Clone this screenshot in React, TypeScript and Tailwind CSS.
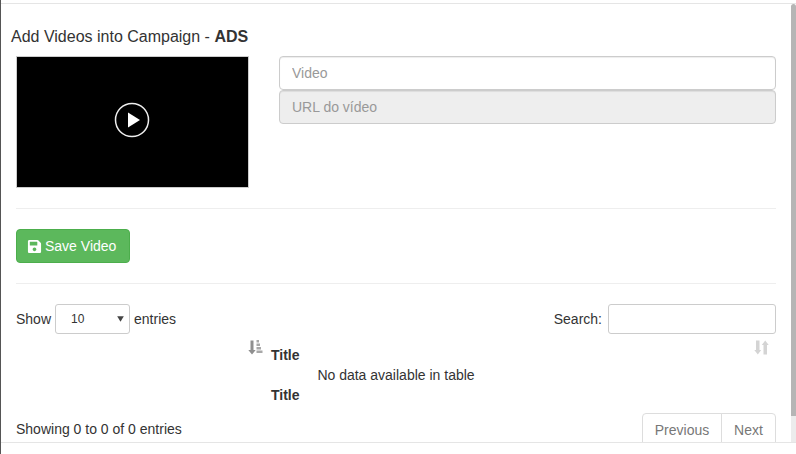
import { FaSave } from "react-icons/fa";

function SortAsc() {
  return (
    <svg width="15" height="15" viewBox="0 0 15 15" className="text-[#8f8f8f]" fill="currentColor">
      <path d="M2.5 0.5h3v9.5h2.2L4 14.5 0.3 10h2.2z" />
      <g className="text-[#a8a8a8]" fill="currentColor">
        <rect x="8.5" y="0" width="2.5" height="2.5" />
        <rect x="8.5" y="3.5" width="3.5" height="2.5" />
        <rect x="8.5" y="7" width="4.5" height="2.5" />
        <rect x="8.5" y="10.5" width="6" height="2.5" />
      </g>
    </svg>
  );
}

function SortBoth() {
  return (
    <svg width="15" height="15" viewBox="0 0 15 15" className="text-[#d4d4d4]" fill="currentColor">
      <path d="M2 0.5h3.5v9.5h1.7L3.8 14.5 0.3 10H2z" />
      <path d="M9.5 14.5H13V5h1.7L11.2 0.5 7.8 5h1.7z" />
    </svg>
  );
}

export default function App() {
  return (
    <div className="relative flex h-[454px] w-[796px] flex-col overflow-hidden border-l border-[#555] bg-white font-['Liberation_Sans',Arial,sans-serif] text-[14px] leading-5 text-[#333]">
      <div className="h-[4px] shrink-0 border-b border-[#e5e5e5]" />
      <div className="h-[438px] shrink-0 overflow-hidden">
        <h4 className="mt-[23px] ml-[10px] h-[20px] text-[16px] leading-5 font-normal">
          Add Videos into Campaign - <b>ADS</b>
        </h4>
        <div className="mt-[9px] ml-[15px] flex w-[760px] justify-between">
          <div className="flex h-[132px] w-[233px] items-center justify-center border border-[#ccc] bg-black">
            <svg width="36" height="36" viewBox="0 0 36 36" fill="none" className="mb-[4px] ml-[-1px]">
              <circle cx="18" cy="18" r="16.5" stroke="#eeeeee" strokeWidth="1.5" />
              <path d="M14 10.5L26 18L14 25.5z" fill="white" />
            </svg>
          </div>
          <div className="flex w-[497px] flex-col">
            <input
              placeholder="Video"
              className="h-[34px] rounded border border-[#ccc] bg-white px-3 shadow-[inset_0_1px_1px_rgba(0,0,0,0.075)] outline-none placeholder:text-[#999]"
            />
            <input
              disabled
              placeholder="URL do vídeo"
              className="h-[34px] rounded border border-[#ccc] bg-[#eee] px-3 shadow-[inset_0_1px_1px_rgba(0,0,0,0.075)] outline-none placeholder:text-[#999]"
            />
          </div>
        </div>
        <div className="mt-[20px] ml-[15px] h-px w-[760px] bg-[#eee]" />
        <button className="mt-[20px] ml-[15px] flex h-[34px] w-[114px] items-center gap-[3px] rounded border border-[#4cae4c] bg-[#5cb85c] pl-[10px] text-white">
          <FaSave className="text-[15px]" />
          Save Video
        </button>
        <div className="mt-[20px] ml-[15px] h-px w-[760px] bg-[#eee]" />
        <div className="mt-[20px] ml-[15px] flex h-[30px] w-[760px] items-center justify-between">
          <div className="flex items-center gap-[4px]">
            <span>Show</span>
            <div className="flex h-[30px] w-[75px] items-center justify-between rounded-[3px] border border-[#ccc] pr-[5px] pl-[15px] text-[12px]">
              <span>10</span>
              <svg width="7" height="6" viewBox="0 0 7 6" fill="#444">
                <path d="M0.2 0.3h6.6L3.5 5.8z" />
              </svg>
            </div>
            <span>entries</span>
          </div>
          <div className="flex items-center gap-[6px]">
            <span>Search:</span>
            <input className="h-[30px] w-[168px] rounded-[3px] border border-[#ccc] outline-none" />
          </div>
        </div>
        <div className="relative mt-[11px] ml-[15px] w-[760px]">
          <div className="absolute top-[-5px] left-[232px]">
            <SortAsc />
          </div>
          <div className="absolute top-[-5px] right-[7px]">
            <SortBoth />
          </div>
          <div className="h-5 pl-[255px] font-bold">Title</div>
          <div className="h-5 text-center">No data available in table</div>
          <div className="h-5 pl-[255px] font-bold">Title</div>
        </div>
        <div className="mt-[8px] ml-[15px] flex w-[760px] items-start justify-between">
          <div className="pt-[6px]">Showing 0 to 0 of 0 entries</div>
          <div className="flex h-[34px] text-[#777]">
            <span className="flex w-[80px] items-center justify-center rounded-l border border-[#ddd]">Previous</span>
            <span className="ml-[-1px] flex w-[55px] items-center justify-center rounded-r border border-[#ddd]">Next</span>
          </div>
        </div>
      </div>
      <div className="flex-1 border-t border-[#e5e5e5]" />
      <div className="absolute top-[4px] right-0 h-[412px] w-[5px] rounded-t bg-[#b5b5b5]" />
      <div className="absolute top-[416px] right-0 h-[26px] w-[5px] bg-[#ececec]" />
    </div>
  );
}
